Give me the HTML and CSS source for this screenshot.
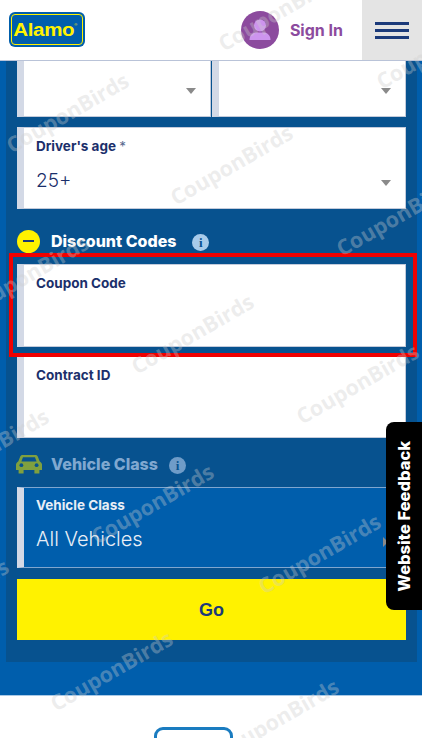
FILE: index.html
```html
<!DOCTYPE html>
<html lang="en">
<head>
<meta charset="utf-8">
<title>Alamo</title>
<link rel="stylesheet" href="styles.css">
</head>
<body>
<div class="page">
  <header class="topbar">
    <div class="logo"><div class="logo-inner"><span class="logo-text">Alamo</span><span class="logo-reg">®</span></div></div>
    <div class="signin">
      <svg class="avatar" viewBox="0 0 38 38" width="38" height="38" aria-hidden="true">
        <circle cx="19" cy="19" r="19" fill="#8c4b9e"/>
        <circle cx="19" cy="14.5" r="6" fill="#cd94ee"/>
        <path d="M8.5 29 C8.5 24 12 21.5 15.5 21.5 L22.5 21.5 C26 21.5 29.5 24 29.5 29 Z" fill="#cd94ee"/>
      </svg>
      <span class="signin-text">Sign In</span>
    </div>
    <button class="menu" aria-label="Menu"><span></span><span></span><span></span></button>
  </header>

  <main class="hero">
    <form class="panel">
      <div class="split">
        <div class="field field-short"><i class="arrow"></i></div>
        <div class="field field-short"><i class="arrow"></i></div>
      </div>
      <div class="field field-age">
        <label class="label">Driver's age <em>*</em></label>
        <div class="value">25+</div>
        <i class="arrow"></i>
      </div>

      <h2 class="section-head discount">
        <span class="minus"><b></b></span>
        <span class="section-title">Discount Codes</span>
        <span class="info">i</span>
      </h2>
      <div class="field field-coupon"><label class="label">Coupon Code</label></div>
      <div class="field field-contract"><label class="label">Contract ID</label></div>

      <h2 class="section-head vehicle">
        <svg class="car" viewBox="0 0 26 20" width="26" height="20" aria-hidden="true">
          <path fill="#7fa03f" d="M6.5 1 H19.5 C20.6 1 21.4 1.6 21.8 2.6 L23.6 7.2 L25 8.4 C25.6 9 26 9.8 26 10.6 V16 H23.4 V19.4 H18.4 V16 H7.6 V19.4 H2.6 V16 H0 V10.6 C0 9.8 .4 9 1 8.4 L2.4 7.2 L4.2 2.6 C4.6 1.6 5.4 1 6.5 1 Z"/>
          <path fill="#07528f" d="M7 3.2 H19 L20.6 7.4 H5.4 Z"/>
          <circle cx="5.4" cy="11.2" r="1.9" fill="#07528f"/>
          <circle cx="20.6" cy="11.2" r="1.9" fill="#07528f"/>
        </svg>
        <span class="section-title">Vehicle Class</span>
        <span class="info">i</span>
      </h2>
      <div class="field field-class">
        <label class="label">Vehicle Class</label>
        <div class="value">All Vehicles</div>
        <i class="arrow arrow-right"></i>
      </div>

      <button class="go" type="button">Go</button>
    </form>
  </main>

  <section class="below"><div class="rewards"></div></section>

  <div class="coupon-mark"></div>
  <div class="feedback"><span>Website Feedback</span></div>

  <svg class="watermarks" width="422" height="738" aria-hidden="true">
    <text transform="translate(12 154) rotate(-30)">CouponBirds</text>
    <text transform="translate(224 52) rotate(-30)">CouponBirds</text>
    <text transform="translate(176 206) rotate(-30)">CouponBirds</text>
    <text transform="translate(342 257) rotate(-30)">CouponBirds</text>
    <text transform="translate(382 90) rotate(-30)">CouponBirds</text>
    <text transform="translate(-28 316) rotate(-30)">CouponBirds</text>
    <text transform="translate(137 375) rotate(-30)">CouponBirds</text>
    <text transform="translate(302 425) rotate(-30)">CouponBirds</text>
    <text transform="translate(-68 490) rotate(-30)">CouponBirds</text>
    <text transform="translate(97 545) rotate(-30)">CouponBirds</text>
    <text transform="translate(264 595) rotate(-30)">CouponBirds</text>
    <text transform="translate(-108 640) rotate(-30)">CouponBirds</text>
    <text transform="translate(56 712) rotate(-30)">CouponBirds</text>
    <text transform="translate(222 760) rotate(-30)">CouponBirds</text>
  </svg>
</div>
</body>
</html>
```
FILE: styles.css
```css
* { box-sizing: border-box; }
html, body { margin: 0; padding: 0; }
body { font-family: Inter, "Noto Sans", sans-serif; background: #fff; }
.page { position: relative; width: 422px; height: 738px; overflow: hidden; }

.topbar { height: 61px; display: flex; align-items: center; background: #fff; border-bottom: 1px solid #b9c3d8; padding-left: 9px; }
.logo { width: 76px; height: 35px; background: #005eac; border-radius: 6px; padding: 2px; margin-bottom: 1px; }
.logo-inner { height: 100%; border: 1px solid #fff200; border-radius: 4px; background: #005eac; display: flex; align-items: center; justify-content: center; color: #fff200; }
.logo-text { font: 700 18px/1 "Liberation Sans", sans-serif; letter-spacing: -.3px; transform: scaleX(1.14); }
.logo-reg { font: 400 4px/1 "Liberation Sans", sans-serif; align-self: flex-start; margin-top: 8px; margin-left: 4px; }
.signin { display: flex; align-items: center; margin-left: auto; }
.avatar { display: block; margin-right: 11px; }
.signin-text { font-size: 16px; font-weight: 700; color: #8c4b9e; margin-right: 19px; }
.menu { width: 60px; height: 60px; border: 0; background: #e4e4e4; padding: 22px 13px 21px; display: flex; flex-direction: column; justify-content: space-between; }
.menu span { display: block; height: 3.4px; background: #1b3a7a; }

.hero { background: #005eac; height: 635px; padding: 0 5px 0 6px; border-bottom: 1px solid #a9c9e6; }
.panel { background: #07528f; height: 601px; padding: 0 11px; display: flex; flex-direction: column; }
.split { display: grid; grid-template-columns: 194px 194px; column-gap: 1px; }

.field { position: relative; background: #fff; border: 1px solid #c3cbdb; border-left: 7px solid #d3d9e6; padding: 9px 12px 0; color: #1b2f6b; }
.field-short { height: 56px; border-top: 0; }
.field-age { height: 82px; margin-top: 10px; }
.field-coupon { height: 83px; margin-top: 11px; }
.field-contract { height: 82px; margin-top: 9px; }
.field-class { height: 81px; margin-top: 11px; padding-top: 8px; background: #005eac; border-color: #7fa6cf; border-left-color: #d3d9e6; color: #e9eef6; }

.label { display: block; font-size: 13.5px; line-height: 18px; font-weight: 700; }
.label em { font-style: normal; font-weight: 400; color: #5a6a90; }
.value { font-size: 19px; line-height: 26px; margin-top: 13px; font-weight: 300; }
.field-class .value { font-size: 20px; margin-top: 12px; }

.arrow { position: absolute; right: 14px; bottom: 22px; width: 0; height: 0; border-left: 5.5px solid transparent; border-right: 5.5px solid transparent; border-top: 6px solid #8a8a8a; }
.arrow-right { right: 17px; bottom: 20px; border: 0; border-top: 5px solid transparent; border-bottom: 5px solid transparent; border-left: 5px solid #8a8a8a; }

.section-head { margin: 0; display: flex; align-items: center; font-size: 16px; line-height: 22px; font-weight: 800; color: #fff; }
.discount { margin-top: 20px; height: 24px; }
.vehicle { margin-top: 14px; height: 24px; color: #80a8d0; }
.minus { width: 23px; height: 23px; border-radius: 50%; background: #fff200; display: flex; align-items: center; justify-content: center; margin-right: 11px; }
.minus b { display: block; width: 11px; height: 2.5px; background: #1b3a7a; }
.car { margin-right: 9px; margin-left: -1px; }
.info { width: 17px; height: 17px; border-radius: 50%; background: #a8cbea; color: #07528f; font: 700 13px/17px "Liberation Serif", serif; text-align: center; margin-left: 16px; margin-top: 3px; }
.vehicle .info { background: #6f9cc8; margin-left: 11px; }

.go { margin-top: 11px; height: 61px; border: 0; background: #fff200; color: #1b3a7a; font: 700 18px/1 "Liberation Sans", sans-serif; }

.below { height: 42px; background: #fff; padding: 31px 0 0 154px; }
.rewards { width: 79px; height: 30px; border: 3px solid #1a7cc0; border-radius: 9px; background: #fff; }

.coupon-mark { position: absolute; left: 9px; top: 253px; width: 408px; height: 104px; border: 4px solid #f00000; }

.feedback { position: absolute; right: 0; top: 422px; width: 36px; height: 188px; background: #000; border-radius: 8px 0 0 8px; display: flex; align-items: center; justify-content: center; }
.feedback span { writing-mode: vertical-rl; transform: rotate(180deg); color: #fff; font-size: 16.5px; font-weight: 800; white-space: nowrap; }

.watermarks { position: absolute; left: 0; top: 0; pointer-events: none; }
.watermarks text { font: 700 21.5px "Open Sans", sans-serif; fill: rgba(205, 205, 205, .36); }
```
